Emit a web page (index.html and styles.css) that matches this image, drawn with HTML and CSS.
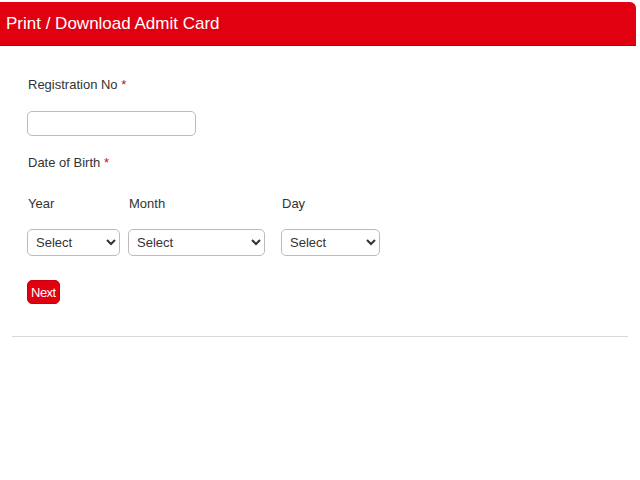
FILE: index.html
```html
<!DOCTYPE html>
<html lang="en">
<head>
  <meta charset="UTF-8" />
  <title>Print / Download Admit Card</title>
  <link rel="stylesheet" href="styles.css">
</head>
<body>

<div class="title-bar">Print / Download Admit Card</div>

<div class="form-area">
  <label for="regno" class="field-label">Registration No <span class="req">*</span></label>
  <input type="text" id="regno" class="text-input">

  <div class="field-label dob-label">Date of Birth <span class="req">*</span></div>

  <div class="date-row">
    <label for="year">Year</label>
    <label for="month">Month</label>
    <label for="day">Day</label>

    <select id="year" class="sel-year">
      <option>Select</option>
    </select>
    <select id="month" class="sel-month">
      <option>Select</option>
    </select>
    <select id="day" class="sel-day">
      <option>Select</option>
    </select>
  </div>

  <button class="next-btn">Next</button>
</div>

<hr class="divider">

</body>
</html>
```

FILE: styles.css
```css
body {
  margin: 0;
  padding: 0;
  background: #fff;
  font-family: 'Liberation Sans', Arial, sans-serif;
  color: #333;
}

.title-bar {
  margin-top: 2px;
  width: 630px;
  height: 43px;
  line-height: 44px;
  padding-left: 6px;
  background: #e00010;
  border-bottom: 1px solid #b8000c;
  border-top-right-radius: 6px;
  color: #fff;
  font-size: 17px;
}

.form-area {
  padding: 31px 0 0 27px;
  display: flex;
  flex-direction: column;
  align-items: flex-start;
}

.field-label {
  display: block;
  font-size: 13px;
  line-height: 16px;
  padding-left: 1px;
}

.req {
  color: #c0161e;
}

.text-input {
  margin-top: 18px;
  width: 169px;
  height: 25px;
  box-sizing: border-box;
  border: 1px solid #bbb;
  border-radius: 5px;
  padding: 2px 6px;
  font-size: 14px;
}

.dob-label {
  margin-top: 19px;
}

.date-row {
  margin-top: 25px;
  display: grid;
  grid-template-columns: 101px 153px auto;
  row-gap: 17px;
  font-size: 13px;
}

.date-row label {
  line-height: 16px;
  padding-left: 1px;
}

.date-row select {
  height: 27px;
  box-sizing: border-box;
  border: 1px solid #bbb;
  border-radius: 5px;
  background: #fff;
  color: #333;
  font-family: 'Liberation Sans', Arial, sans-serif;
  font-size: 13px;
  padding-left: 4px;
}

.sel-year {
  width: 93px;
}

.sel-month {
  width: 137px;
}

.sel-day {
  width: 99px;
}

.next-btn {
  margin-top: 24px;
  height: 24px;
  padding: 0 3px;
  border: 1px solid #c8000e;
  border-radius: 5px;
  background: #e00010;
  color: #fff;
  font-family: 'Liberation Sans', Arial, sans-serif;
  font-size: 13px;
  letter-spacing: -0.5px;
  cursor: pointer;
}

.divider {
  margin: 32px 12px 0 12px;
  border: none;
  border-top: 1px solid #d8d8d8;
}
```
